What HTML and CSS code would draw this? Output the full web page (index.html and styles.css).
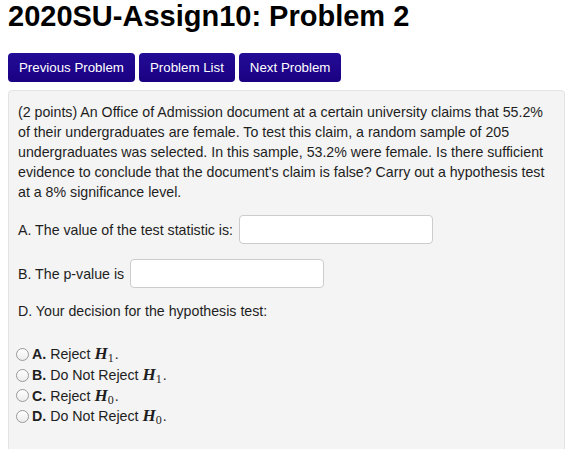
FILE: index.html
```html
<!DOCTYPE html>
<html lang="en">
<head>
    <meta charset="UTF-8">
    <title>2020SU-Assign10: Problem 2</title>
    <link rel="stylesheet" href="styles.css">
</head>
<body>
    <h1 class="problem-title">2020SU-Assign10: Problem 2</h1>

    <div class="nav-buttons">
        <a href="#" class="nav-btn">Previous Problem</a>
        <a href="#" class="nav-btn">Problem List</a>
        <a href="#" class="nav-btn">Next Problem</a>
    </div>

    <div class="problem-body">
        <p class="problem-text">(2 points) An Office of Admission document at a certain university claims that 55.2% of their undergraduates are female. To test this claim, a random sample of 205 undergraduates was selected. In this sample, 53.2% were female. Is there sufficient evidence to conclude that the document's claim is false? Carry out a hypothesis test at a 8% significance level.</p>

        <div class="answer-row row-a">
            <label for="ansA">A. The value of the test statistic is:</label>
            <input type="text" id="ansA" class="answer-input">
        </div>

        <div class="answer-row row-b">
            <label for="ansB">B. The p-value is</label>
            <input type="text" id="ansB" class="answer-input">
        </div>

        <div class="decision-label">D. Your decision for the hypothesis test:</div>

        <div class="choices">
            <label class="choice"><input type="radio" name="decision"><b>A.</b> Reject <span class="math"><i>H</i><sub>1</sub></span>.</label>
            <label class="choice"><input type="radio" name="decision"><b>B.</b> Do Not Reject <span class="math"><i>H</i><sub>1</sub></span>.</label>
            <label class="choice"><input type="radio" name="decision"><b>C.</b> Reject <span class="math"><i>H</i><sub>0</sub></span>.</label>
            <label class="choice"><input type="radio" name="decision"><b>D.</b> Do Not Reject <span class="math"><i>H</i><sub>0</sub></span>.</label>
        </div>
    </div>
</body>
</html>
```

FILE: styles.css
```css
body {
    margin: 0;
    padding: 0 0 0 8px;
    font-family: "Liberation Sans", Arial, sans-serif;
    color: #222;
    background: white;
}
.problem-title {
    margin: 0;
    font-size: 29px;
    line-height: 33px;
    font-weight: bold;
    color: #000;
}
.nav-buttons {
    display: flex;
    gap: 4px;
    margin-top: 20px;
}
.nav-btn {
    display: block;
    height: 29px;
    line-height: 29px;
    padding: 0 11px;
    border-radius: 4px;
    background: linear-gradient(#230c96, #1a0082);
    color: white;
    font-size: 13.3px;
    text-decoration: none;
}
.problem-body {
    margin-top: 8px;
    margin-right: 1px;
    height: 400px;
    padding: 11px 15px 0 9px;
    background: #f4f4f4;
    border: 1px solid #e3e3e3;
    border-radius: 4px;
    font-size: 14.2px;
    color: #1e1e1e;
}
.problem-text {
    margin: 0;
    line-height: 20px;
}
.answer-row {
    display: flex;
    align-items: center;
    gap: 6px;
}
.row-a {
    margin-top: 13px;
}
.row-b {
    margin-top: 15px;
}
.answer-input {
    box-sizing: border-box;
    width: 194px;
    height: 29px;
    border: 1px solid #ccc;
    border-radius: 4px;
    background: white;
    margin: 0;
}
.decision-label {
    margin-top: 13px;
    line-height: 20px;
}
.choices {
    margin-top: 23px;
}
.choice {
    display: flex;
    align-items: center;
    height: 20.7px;
    margin-left: -2px;
}
.choice input {
    appearance: none;
    -webkit-appearance: none;
    width: 13px;
    height: 13px;
    margin: 0 3px 0 0;
    border: 1px solid #9a9a9a;
    border-radius: 50%;
    background: linear-gradient(#ffffff, #ececec);
    box-sizing: border-box;
}
.choice b {
    margin-right: 4px;
}
.math {
    font-family: "Liberation Serif", "Times New Roman", serif;
    font-size: 17px;
    margin-left: 4px;
    margin-right: 1px;
}
.math i {
    font-weight: bold;
}
.math sub {
    font-size: 12px;
    vertical-align: -3px;
    line-height: 0;
}
```
